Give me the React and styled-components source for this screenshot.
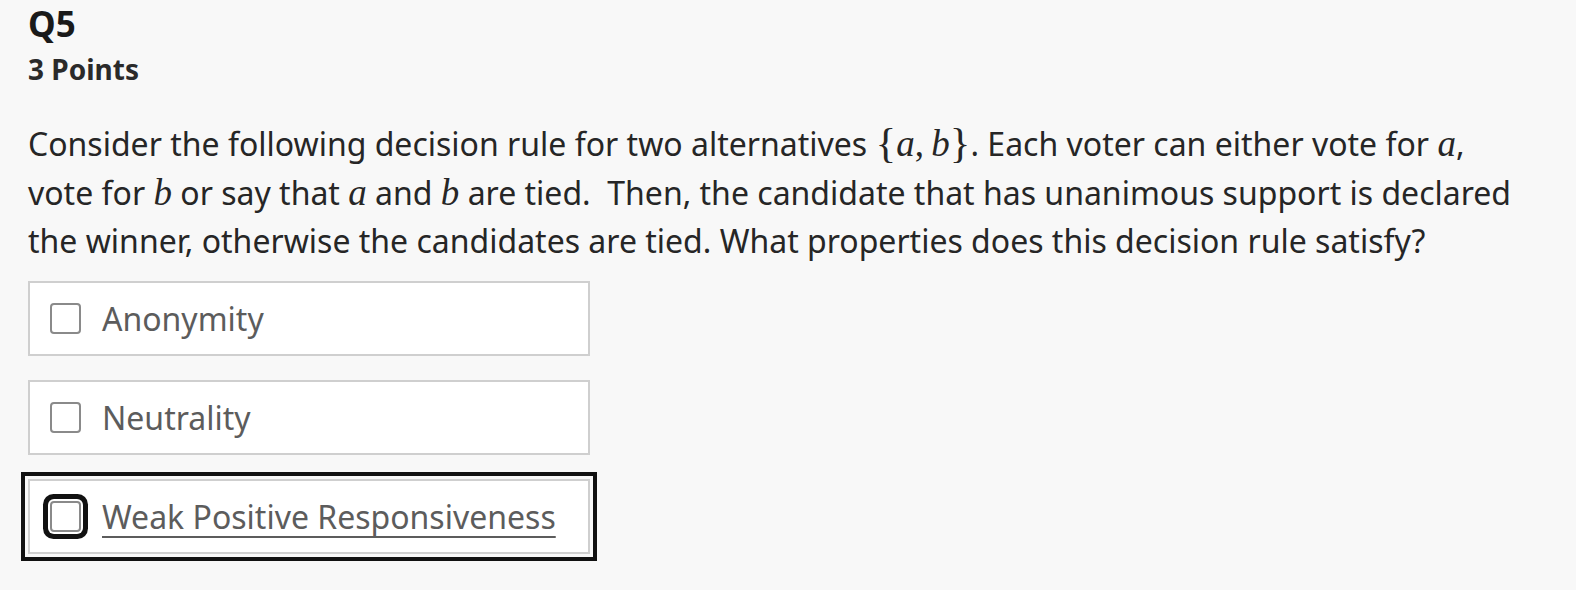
import React from 'react';
import styled, { createGlobalStyle } from 'styled-components';

const GlobalStyle = createGlobalStyle`
  html, body {
    margin: 0;
    padding: 0;
    background: #f8f8f8;
  }
  body {
    font-family: "Noto Sans", "Open Sans", sans-serif;
    color: #222;
  }
`;

const options = [
  { id: 'anon', label: 'Anonymity' },
  { id: 'neutral', label: 'Neutrality' },
  { id: 'wpr', label: 'Weak Positive Responsiveness', focused: true },
];

const Page = styled.div`
  padding: 2px 28px 40px 28px;
  width: 1530px;
`;

const Title = styled.h2`
  margin: 0;
  font-size: 35px;
  font-weight: 700;
  line-height: 44px;
  color: #1a1a1a;
`;

const Points = styled.div`
  margin-top: 4px;
  font-size: 28px;
  font-weight: 700;
  line-height: 38px;
  color: #2a2a2a;
`;

const Prompt = styled.p`
  margin: 32px 0 15px 0;
  font-size: 32px;
  line-height: 48.5px;
  color: #262626;
`;

const M = styled.span`
  font-family: "Liberation Serif", "DejaVu Serif", serif;
  font-style: ${p => (p.up ? 'normal' : 'italic')};
  font-size: 37px;
  line-height: 0;
`;

const Brace = styled.span`
  font-family: "Liberation Serif", "DejaVu Serif", serif;
  font-size: 43px;
  line-height: 0;
  vertical-align: -1px;
`;

const OptionList = styled.div`
  display: flex;
  flex-direction: column;
  gap: 24px;
  width: 562px;
`;

const Option = styled.label`
  display: flex;
  align-items: center;
  gap: 21px;
  box-sizing: border-box;
  height: 75px;
  padding: 0 20px;
  background: #fff;
  border: 2px solid #cfcfcf;
  outline: ${p => (p.focused ? '4px solid #111' : 'none')};
  outline-offset: 3px;
  cursor: pointer;
`;

const Box = styled.span`
  flex: none;
  box-sizing: border-box;
  width: 31px;
  height: 31px;
  border: 2px solid #8a8a8a;
  border-radius: 4px;
  background: #fff;
  box-shadow: ${p => (p.focused ? '0 0 0 2px #fff, 0 0 0 7px #111' : 'none')};
`;

const Label = styled.span`
  font-size: 32px;
  color: #5c5c5c;
  text-decoration: ${p => (p.focused ? 'underline' : 'none')};
  text-decoration-thickness: 2px;
  text-decoration-skip-ink: none;
  text-underline-offset: 7px;
`;

export default function App() {
  return (
    <Page>
      <GlobalStyle />
      <Title>Q5</Title>
      <Points>3 Points</Points>
      <Prompt>
        Consider the following decision rule for two alternatives{' '}
        <Brace>{'{'}</Brace><M>a</M><M up>,&thinsp;</M><M>b</M><Brace>{'}'}</Brace>. Each voter can either vote for <M>a</M>,
        <br />
        vote for <M>b</M> or say that <M>a</M> and <M>b</M> are tied.&nbsp; Then, the candidate that has unanimous support is declared
        <br />
        the winner, otherwise the candidates are tied. What properties does this decision rule satisfy?
      </Prompt>
      <OptionList>
        {options.map(o => (
          <Option key={o.id} focused={o.focused}>
            <Box focused={o.focused} />
            <Label focused={o.focused}>{o.label}</Label>
          </Option>
        ))}
      </OptionList>
    </Page>
  );
}
